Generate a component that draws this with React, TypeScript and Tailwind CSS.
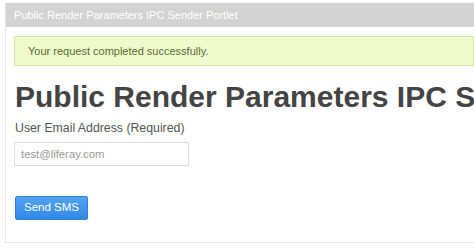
export default function App() {
  return (
    <div className="w-[474px] h-[248px] bg-white overflow-hidden pl-[5px] pt-[3px]" style={{ fontFamily: '"Liberation Sans", Arial, sans-serif' }}>
      <div className="h-[240px] border-l border-b border-[#e6e6e6] flex flex-col">
        {/* portlet title bar */}
        <div className="h-[24px] bg-[#d3d3d3] text-white text-[11px] pl-[8px] flex items-center whitespace-nowrap">
          Public Render Parameters IPC Sender Portlet
        </div>

        <div className="pl-[8px] pt-[9px]">
          {/* success message */}
          <div className="h-[30px] border border-[#d5e8a0] bg-[#effacd] text-[#5a6b33] text-[11px] pl-[13px] flex items-center">
            Your request completed successfully.
          </div>

          <h1 className="mt-[14px] font-bold text-[30px] leading-[34px] text-[#444444] whitespace-nowrap overflow-hidden pl-[1px]">
            Public Render Parameters IPC Sender
          </h1>

          <label className="block mt-[5px] text-[12.3px] leading-[18px] text-[#555555] pl-[1px]">
            User Email Address (Required)
          </label>

          <input
            type="text"
            placeholder="test@liferay.com"
            className="mt-[5px] w-[175px] h-[24px] border border-[#dddddd] px-[6px] text-[11.3px] text-[#555] placeholder:text-[#999999] outline-none"
          />

          <div className="mt-[28px] pl-[1px]">
            <button className="w-[73px] h-[24px] rounded-[2px] bg-gradient-to-b from-[#52a3f2] to-[#3088e6] border border-[#2e7fd6] text-white text-[11.5px] leading-none">
              Send SMS
            </button>
          </div>
        </div>
      </div>
    </div>
  );
}
